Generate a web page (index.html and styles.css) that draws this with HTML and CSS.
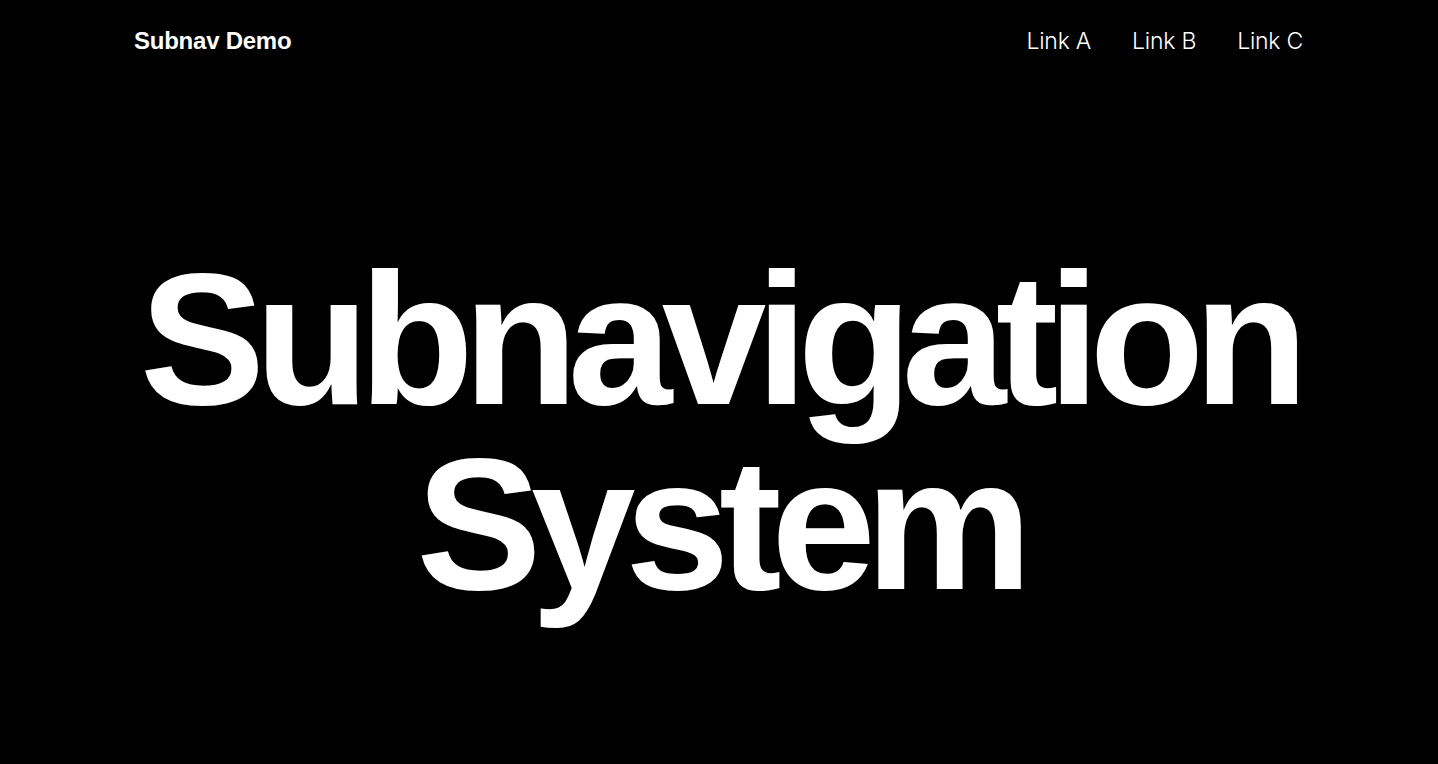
FILE: index.html
```html
<!DOCTYPE html>
<html lang="en">
<head>
<meta charset="utf-8">
<title>Subnav Demo</title>
<link rel="stylesheet" href="styles.css">
</head>
<body>
<header class="topbar">
  <a class="brand" href="#">Subnav Demo</a>
  <nav class="links">
    <a href="#">Link A</a>
    <a href="#">Link B</a>
    <a href="#">Link C</a>
  </nav>
</header>
<main class="hero">
  <h1 class="title"><span class="line">Subnavigation</span><span class="line">System</span></h1>
</main>
</body>
</html>
```
FILE: styles.css
```css
html, body {
  margin: 0;
  padding: 0;
  background: #000;
  color: #fff;
}
body {
  font-family: "Liberation Sans", Arial, sans-serif;
  height: 764px;
  overflow: hidden;
}
a {
  color: #fff;
  text-decoration: none;
}
.topbar {
  display: flex;
  justify-content: space-between;
  align-items: center;
  height: 82px;
  padding: 0 135px 0 134px;
}
.brand {
  font-weight: 700;
  font-size: 24px;
  letter-spacing: -0.01em;
}
.links {
  display: flex;
  gap: 41px;
}
.links a {
  font-family: Inter, "Liberation Sans", sans-serif;
  font-weight: 300;
  font-size: 23px;
  letter-spacing: -0.01em;
}
.hero {
  display: flex;
  justify-content: center;
  padding-top: 170px;
}
.title {
  margin: 0;
  display: flex;
  flex-direction: column;
  align-items: center;
  font-weight: 700;
  font-size: 188px;
  line-height: 175px;
  letter-spacing: -0.056em;
}
.line {
  display: block;
  margin-bottom: 10px;
}
```
